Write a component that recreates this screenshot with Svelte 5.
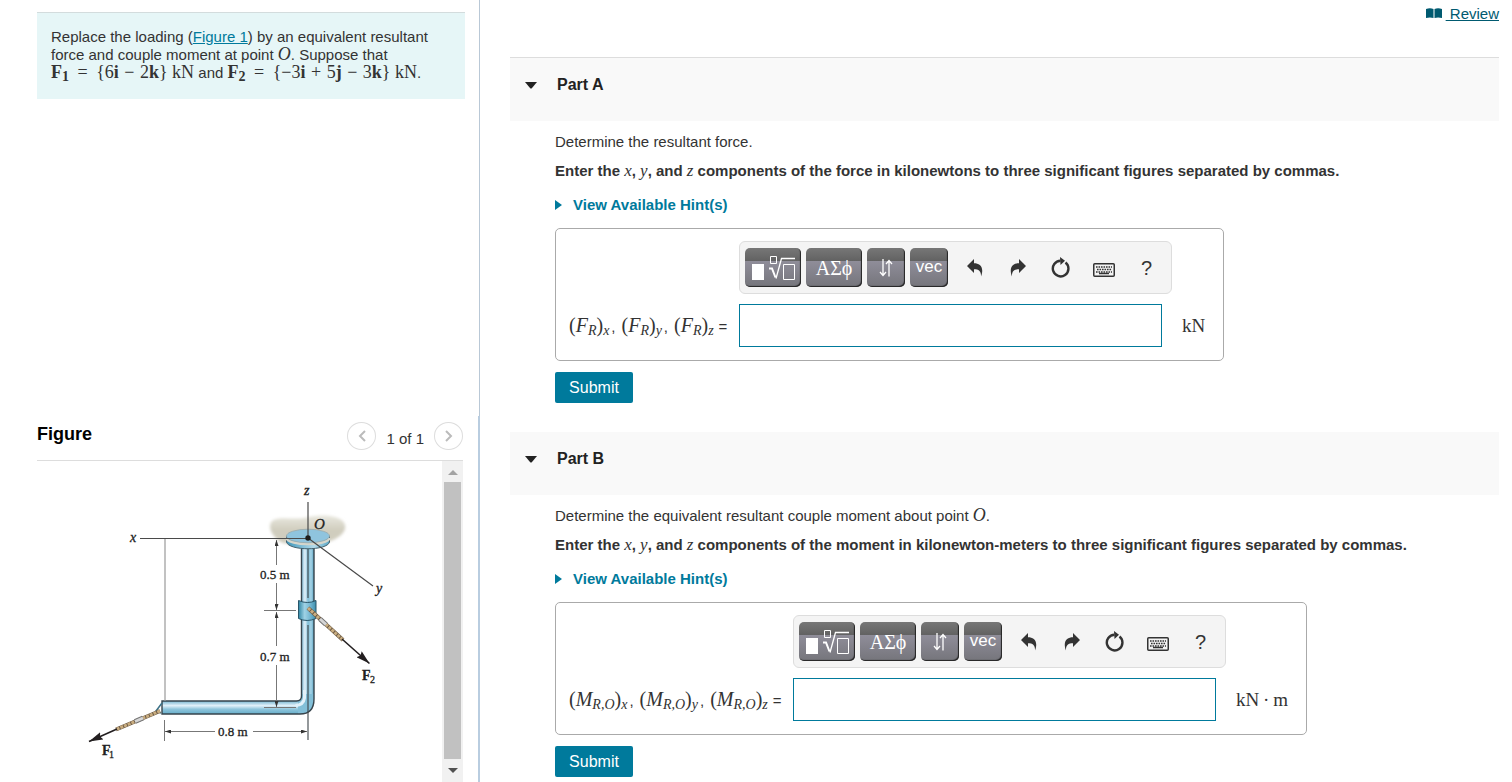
<script lang="ts">
  type Part = {
    id: string;
    title: string;
    task: string;
    point?: string;
    quantity: string;
    unit: string;
    symbol: string;
    sub: string;
    answerUnit: string;
    wide: boolean;
  };

  const parts: Part[] = [
    {
      id: 'a',
      title: 'Part A',
      task: 'Determine the resultant force',
      quantity: 'force',
      unit: 'kilonewtons',
      symbol: 'F',
      sub: 'R',
      answerUnit: 'kN',
      wide: false
    },
    {
      id: 'b',
      title: 'Part B',
      task: 'Determine the equivalent resultant couple moment about point ',
      point: 'O',
      quantity: 'moment',
      unit: 'kilonewton-meters',
      symbol: 'M',
      sub: 'R,O',
      answerUnit: 'kN\u2009·\u2009m',
      wide: true
    }
  ];

  const axes = ['x', 'y', 'z'];

  let answers = $state<Record<string, string>>({ a: '', b: '' });
  let open = $state<Record<string, boolean>>({ a: true, b: true });
</script>

<div class="page">
  <aside class="left">
    <section class="problem">
      <p class="statement">
        Replace the loading (<a href="#figure">Figure 1</a>) by an equivalent resultant<br />
        force and couple moment at point <i class="math">O</i>. Suppose that<br />
        <span class="math"><b>F<sub>1</sub></b> <span class="rel">=</span> {'{'}6<b>i</b> <span class="bin">−</span> 2<b>k</b>{'}'} kN</span> and
        <span class="math"><b>F<sub>2</sub></b> <span class="rel">=</span> {'{'}−3<b>i</b> <span class="bin">+</span> 5<b>j</b> <span class="bin">−</span> 3<b>k</b>{'}'} kN</span>.
      </p>
    </section>

    <section class="figure" id="figure">
      <header class="figure-head">
        <h2>Figure</h2>
        <div class="pager">
          <button aria-label="Previous figure">
            <svg width="10" height="14" viewBox="0 0 10 14"><path d="M8 2 3 7l5 5" /></svg>
          </button>
          <span>1 of 1</span>
          <button aria-label="Next figure">
            <svg width="10" height="14" viewBox="0 0 10 14"><path d="M2 2l5 5-5 5" /></svg>
          </button>
        </div>
      </header>
      <div class="viewer">
        <svg class="drawing" width="405" height="321" viewBox="37 461 405 321" role="img" aria-label="Pipe assembly loaded by forces F1 and F2">
          <defs>
            <linearGradient id="pipeV" x1="0" x2="1" y1="0" y2="0">
              <stop offset="0" stop-color="#8fc3da" />
              <stop offset="0.25" stop-color="#e2f1fa" />
              <stop offset="0.5" stop-color="#7fbdd6" />
              <stop offset="0.75" stop-color="#a5d3e6" />
              <stop offset="1" stop-color="#5ba3c2" />
            </linearGradient>
            <linearGradient id="pipeH" x1="0" x2="0" y1="0" y2="1">
              <stop offset="0" stop-color="#8fc3da" />
              <stop offset="0.3" stop-color="#e2f1fa" />
              <stop offset="0.6" stop-color="#8ec5dc" />
              <stop offset="1" stop-color="#66adc9" />
            </linearGradient>
            <linearGradient id="collar" x1="0" x2="1" y1="0" y2="0">
              <stop offset="0" stop-color="#2f86a4" />
              <stop offset="0.35" stop-color="#9fd2e5" />
              <stop offset="0.7" stop-color="#6fb3ce" />
              <stop offset="1" stop-color="#3d8fad" />
            </linearGradient>
            <linearGradient id="rim" x1="0" x2="1" y1="0" y2="0">
              <stop offset="0" stop-color="#3f97ba" />
              <stop offset="0.65" stop-color="#b5dcec" />
              <stop offset="1" stop-color="#5aa7c6" />
            </linearGradient>
            <linearGradient id="ceiling" x1="0" x2="0" y1="0" y2="1">
              <stop offset="0" stop-color="#e9e8df" />
              <stop offset="0.5" stop-color="#d0cdbe" />
              <stop offset="1" stop-color="#d0cdbe" />
            </linearGradient>
            <filter id="soft" x="-20%" y="-30%" width="140%" height="160%">
              <feGaussianBlur stdDeviation="1.6" />
            </filter>
            <marker id="tip" viewBox="0 0 6 4" markerWidth="6" markerHeight="4" refX="6" refY="2" orient="auto" markerUnits="userSpaceOnUse">
              <path d="M0 0 6 2 0 4z" fill="#333" />
            </marker>
            <marker id="force" viewBox="0 0 14 8" markerWidth="14" markerHeight="8" refX="14" refY="4" orient="auto" markerUnits="userSpaceOnUse">
              <path d="M0 0 14 4 0 8 2 4z" fill="#231f20" />
            </marker>
          </defs>

          <path d="M272 521c8-5 20-1 32-3 14-4 38-4 41 7 2 8-9 15-18 17-14 3-34 3-44 1-8-3-17-15-11-22z" fill="url(#ceiling)" filter="url(#soft)" />

          <!-- pipe -->
          <path d="M301.5 546v151q0 4-4 4H162v13h138q14 0 14-15V546z" fill="#82bfd8" />
          <rect x="302" y="546" width="12" height="148" fill="url(#pipeV)" />
          <rect x="162" y="702" width="136" height="12" fill="url(#pipeH)" />
          <path d="M304.5 690v8q-1 7-9 7.5" fill="none" stroke="#e2f1fa" stroke-width="3" />
          <path d="M301.5 546v150q0 5-5 5H162v13h138q14 0 14-15V546" fill="none" stroke="#37444c" stroke-width="1.4" />
          <path d="M308 549v49M308 625v115" stroke="#3e454a" stroke-width="1.1" />
          <path d="M298.5 600.5q9 4 17.5 0v18q-9 4-17.5 0z" fill="url(#collar)" stroke="#285569" />

          <!-- flange -->
          <path d="M286.5 536v6c2 9 41 9 43 0v-6z" fill="url(#rim)" stroke="#44606c" />
          <path d="M286.500 538c2 8 41 8 43 0" fill="none" stroke="#d5d6cc" stroke-width="2.5" />
          <ellipse cx="308" cy="536" rx="21.5" ry="6.8" fill="#8fc4de" stroke="#9aa9ab" stroke-width="0.8" />

          <g class="axis">
            <path d="M308 502v36M140 538.5h168M308 538l65 48" />
            <path class="thin" d="M165 539v162" />
          </g>
          <circle cx="308" cy="538" r="2.7" fill="#1d1d1d" />

          <!-- dimensions -->
          <g class="dim">
            <path d="M276.5 565v-25" marker-end="url(#tip)" />
            <path d="M276.5 583v27" marker-end="url(#tip)" />
            <path d="M276.5 646v-34" marker-end="url(#tip)" />
            <path d="M276.5 665v42" marker-end="url(#tip)" />
            <path d="M264 610.5h32M264 707.5h32M164.5 720v21" />
            <path d="M215 731.5h-50" marker-end="url(#tip)" />
            <path d="M253 731.5h54" marker-end="url(#tip)" />
          </g>

          <!-- cables and forces -->
          <path d="M162 703l-6 8 5 2" fill="none" stroke="#3c7288" stroke-width="1.5" />
          <path d="M160 711 116 729.5M308 608l35 32" stroke="#6b5a45" stroke-width="4" />
          <path d="M160 711 116 729.5M308 608l35 32" stroke="#c9ad80" stroke-width="3" stroke-dasharray="3 1" />
          <path d="m143 718-8 3.5M320 619l6 5.5" stroke="#777" stroke-width="5" />
          <path d="m143 718-8 3.5M320 619l6 5.5" stroke="#d6d6d6" stroke-width="3" />
          <path d="M117 729 89 741.5" stroke="#231f20" stroke-width="1.6" marker-end="url(#force)" />
          <path d="m342 639 27.5 24.5" stroke="#231f20" stroke-width="1.6" marker-end="url(#force)" />

          <g class="label">
            <text class="it" x="304" y="495">z</text>
            <text class="it" x="130" y="542">x</text>
            <text class="it" x="376" y="593">y</text>
            <text class="it big" x="314" y="529">O</text>
            <text x="260" y="579">0.5 m</text>
            <text x="260" y="661">0.7 m</text>
            <text x="218" y="736">0.8 m</text>
            <text class="bold" x="102" y="755">F</text>
            <text class="small" x="109" y="758">1</text>
            <text class="bold" x="362" y="680">F</text>
            <text class="small" x="370" y="683">2</text>
          </g>
        </svg>
        <div class="scrollbar" aria-hidden="true">
          <span class="arrow up"></span>
          <span class="thumb"></span>
          <span class="arrow down"></span>
        </div>
      </div>
    </section>
  </aside>

  <main class="right">
    <nav class="top">
      <svg width="16" height="11" viewBox="0 0 16 11" aria-hidden="true">
        <path d="M0 1Q4-.5 7.500 1v9Q4 9 0 10zM8.500 1Q12-.5 16 1v9q-4-1-7.500 0z" fill="#005a70" />
      </svg>
      <a href="#review">&nbsp;Review</a>
    </nav>

    {#each parts as part (part.id)}
      <section class="part">
        <header class="part-head">
          <button class="toggle" aria-expanded={open[part.id]} onclick={() => (open[part.id] = !open[part.id])}>
            <svg width="12" height="7" viewBox="0 0 12 7" aria-hidden="true"><path d="M0 0h12L7 6q-1 1-2 0z" fill="#222" /></svg>
            {part.title}
          </button>
        </header>

        {#if open[part.id]}
          <div class="body">
            <p class="task">{part.task}{#if part.point}<i class="math">{part.point}</i>{/if}.</p>
            <p class="instruction">
              Enter the <i class="math">x</i>, <i class="math">y</i>, and <i class="math">z</i> components of the {part.quantity}
              in {part.unit} to three significant figures separated by commas.
            </p>
            <button class="hints">
              <svg width="7" height="10" viewBox="0 0 7 10" aria-hidden="true"><path d="M0 0l7 5-7 5z" fill="#007a9c" /></svg>
              View Available Hint(s)
            </button>

            <div class="answer" class:wide={part.wide}>
              <div class="toolbar">
                <button class="key large" aria-label="Templates">
                  <svg width="44" height="26" viewBox="0 0 44 26" fill="none" stroke="#fff">
                    <path d="M1 9h12v16H1z" fill="#fff" stroke="none" />
                    <path d="M19.500 1.500h6v7h-6z" />
                    <path d="M18 13.500h3l3.500 9" stroke-width="2" />
                    <path d="m25 23.500 5.500-20H44" stroke-width="1.3" />
                    <path d="M32.500 9.500h11v15h-11z" />
                  </svg>
                </button>
                <button class="key large greek">ΑΣϕ</button>
                <button class="key" aria-label="Arrows">
                  <svg width="14" height="18" viewBox="0 0 14 18" fill="none" stroke="#fff" stroke-width="1.3">
                    <path d="M4 0v16M1 13l3 3.500L7 13M10 17.500V2M7 5l3-3.500L13 5" />
                  </svg>
                </button>
                <button class="key vec">vec</button>
                <div class="tools">
                  <button aria-label="Undo">
                    <svg width="16" height="18" viewBox="0 0 16 18"><path d="M7 0v4.200c6 0 10.500 4 7 13.300.3-5-2-7.200-7-7.200V14L0 7z" /></svg>
                  </button>
                  <button aria-label="Redo">
                    <svg width="16" height="18" viewBox="0 0 16 18"><path d="M9 0v4.200c-6 0-10.500 4-7 13.300-.3-5 2-7.200 7-7.200V14l7-7z" /></svg>
                  </button>
                  <button aria-label="Reset">
                    <svg width="20" height="22" viewBox="0 0 20 22">
                      <path d="M14.500 5.500a7.800 7.800 0 1 1-5-1.700" fill="none" stroke="#333" stroke-width="2.4" />
                      <path d="m9 0 5 3.800L9.500 8z" />
                    </svg>
                  </button>
                  <button class="low" aria-label="Keyboard">
                    <svg width="22" height="14" viewBox="0 0 22 14">
                      <rect x="0.750" y="0.750" width="20.500" height="12.500" rx="1" fill="none" stroke="#333" stroke-width="1.5" />
                      <path d="M3 4h16M4 6.500h15M3 9h16" stroke="#333" stroke-width="1.6" stroke-dasharray="1.6 0.9" />
                      <path d="M6 10.500h10" stroke="#333" stroke-width="1.5" />
                    </svg>
                  </button>
                  <button class="help" aria-label="Help">?</button>
                </div>
              </div>
              <label for="answer-{part.id}">
                {#each axes as axis, i}
                  <span>(<i>{part.symbol}<sub>{part.sub}</sub></i>)<sub><i>{axis}</i></sub></span>{#if i < 2}<span class="comma">,</span>{/if}
                {/each}
                <span class="equals">=</span>
              </label>
              <input id="answer-{part.id}" type="text" autocomplete="off" bind:value={answers[part.id]} />
              <span class="unit">{part.answerUnit}</span>
            </div>

            <button class="submit">Submit</button>
          </div>
        {/if}
      </section>
    {/each}
  </main>
</div>

<style>
  :global(body) {
    font-family: 'Liberation Sans', Arial, sans-serif;
    font-size: 15px;
    line-height: 18px;
    background: #fff;
    color: #333;
    margin: 0;
  }
  * {
    box-sizing: border-box;
  }
  p,
  h2 {
    margin: 0;
  }
  button {
    font: inherit;
    color: inherit;
    background: none;
    border: 0;
    padding: 0;
    cursor: pointer;
  }
  svg {
    display: block;
    flex: none;
  }
  .page {
    display: grid;
    grid-template-columns: 480px minmax(0, 1fr);
    min-height: 100vh;
  }
  .left {
    display: flex;
    flex-direction: column;
  }
  .problem {
    flex: 1;
    padding: 12px 14px 0 37px;
    border-right: 1px solid #b9c8d6;
  }
  .statement {
    background: #e6f6f7;
    border-top: 1px solid #d3dcdd;
    padding: 15px 14px 17px;
    white-space: nowrap;
  }
  .statement a {
    color: #007a9c;
  }
  .math {
    font-family: 'Liberation Serif', serif;
    font-size: 18px;
    line-height: 1px;
    font-weight: 400;
  }
  .instruction .math {
    font-size: 17px;
  }
  .rel {
    margin: 0 4px;
  }
  .bin {
    margin: 0 1px;
  }
  sub {
    font-size: 14px;
    line-height: 1px;
    vertical-align: -3px;
  }

  /* figure */
  .figure {
    padding-left: 37px;
    border-right: 2px solid #b9cde0;
  }
  .figure-head {
    display: flex;
    justify-content: space-between;
    height: 45px;
    margin-right: 15px;
    border-bottom: 1px solid #ddd;
  }
  h2 {
    font-size: 18px;
    line-height: 36px;
    color: #000;
  }
  .pager {
    display: flex;
    align-items: flex-start;
    gap: 10px;
    padding-top: 6px;
  }
  .pager span {
    line-height: 34px;
  }
  .pager button {
    display: flex;
    align-items: center;
    justify-content: center;
    width: 29px;
    height: 28px;
    border: 1px solid #ddd;
    border-radius: 50%;
  }
  .pager path {
    fill: none;
    stroke: #bbb;
    stroke-width: 2;
  }
  .viewer {
    display: flex;
    justify-content: space-between;
    margin-right: 15px;
  }
  .scrollbar {
    width: 21px;
    display: flex;
    flex-direction: column;
    align-items: center;
    background: #f1f1f1;
  }
  .thumb {
    flex: 1;
    width: 17px;
    background: #c1c1c1;
  }
  .arrow {
    border: 5px solid transparent;
  }
  .up {
    border-bottom-color: #a3a3a3;
    border-top: 0;
    margin: 9px 0 7px;
  }
  .down {
    border-top-color: #505050;
    border-bottom: 0;
    margin: 9px 0;
  }
  .axis path {
    fill: none;
    stroke: #4a4a4a;
    stroke-width: 1.2;
  }
  .axis .thin {
    stroke: #999;
  }
  .dim path {
    stroke: #777;
    stroke-width: 1;
  }
  .label text {
    font-family: 'Liberation Serif', serif;
    font-size: 13px;
    fill: #222;
    stroke: #222;
    stroke-width: 0.3;
  }
  .label .it {
    font-style: italic;
    font-size: 14px;
  }
  .label .big {
    font-size: 15px;
  }
  .label .bold {
    font-weight: 700;
    font-size: 14px;
  }
  .label .small {
    font-size: 10px;
  }

  /* parts */
  .right {
    padding: 0 13px 0 30px;
  }
  .top {
    display: flex;
    justify-content: flex-end;
    gap: 4px;
    height: 57px;
    padding-top: 5px;
  }
  .top svg {
    margin-top: 3px;
  }
  .top a {
    color: #005a70;
  }
  .part {
    padding-bottom: 29px;
  }
  .part:first-of-type {
    border-top: 1px solid #ddd;
  }
  .part:last-of-type {
    padding-bottom: 5px;
  }
  .part-head {
    height: 63px;
    background: #f9f9f9;
    padding: 18px 15px;
  }
  .toggle {
    display: flex;
    align-items: center;
    gap: 20px;
    font-size: 16px;
    font-weight: 700;
    color: #222;
  }
  .body {
    display: flex;
    flex-direction: column;
    align-items: flex-start;
    padding: 12px 0 0 45px;
  }
  .instruction {
    margin-top: 11px;
    font-weight: 700;
  }
  .hints {
    display: flex;
    align-items: center;
    gap: 11px;
    margin: 16px 0 14px;
    font-weight: 700;
    color: #007a9c;
  }
  .answer {
    display: grid;
    grid-template-columns: 170px 423px auto;
    row-gap: 10px;
    padding: 12px 18px 13px 13px;
    border: 1px solid #aaa;
    border-radius: 5px;
    align-items: center;
  }
  .answer.wide {
    grid-template-columns: 224px 423px auto;
  }
  .toolbar {
    grid-column: 2 / 4;
    justify-self: start;
    display: flex;
    gap: 5px;
    height: 53px;
    padding: 6px 3px 6px 5px;
    background: #f4f4f4;
    border: 1px solid #ddd;
    border-radius: 6px;
  }
  .key {
    display: flex;
    align-items: center;
    justify-content: center;
    width: 38px;
    height: 39px;
    color: #fff;
    background: linear-gradient(#777 0, #626262 33%, #8f8d99 34%, #75757b 100%);
    border-radius: 5px;
    box-shadow: inset -1px -1px 1px #222;
  }
  .key.large {
    width: 56px;
  }
  .greek {
    font-family: 'Liberation Serif', serif;
    font-size: 20px;
  }
  .vec {
    font-size: 17px;
    padding-bottom: 2px;
  }
  .tools {
    display: flex;
  }
  .tools button {
    width: 43px;
    display: flex;
    align-items: center;
    justify-content: center;
    fill: #333;
  }
  .tools .low {
    padding-top: 4px;
  }
  .tools .help {
    font-size: 20px;
  }
  label {
    font-family: 'Liberation Serif', serif;
    font-size: 20px;
    white-space: nowrap;
  }
  .comma,
  .equals {
    font-family: 'Liberation Sans', Arial, sans-serif;
    font-size: 15px;
  }
  .comma {
    margin: 0 6px 0 2px;
  }
  input {
    width: 100%;
    height: 43px;
    padding: 0 8px;
    border: 1px solid #007a9c;
    font: inherit;
  }
  .unit {
    font-family: 'Liberation Serif', serif;
    font-size: 19px;
    margin-left: 20px;
  }
  .submit {
    width: 78px;
    height: 31px;
    margin-top: 11px;
    background: #007a9c;
    border-radius: 2px;
    color: #fff;
    font-size: 16px;
  }
</style>
